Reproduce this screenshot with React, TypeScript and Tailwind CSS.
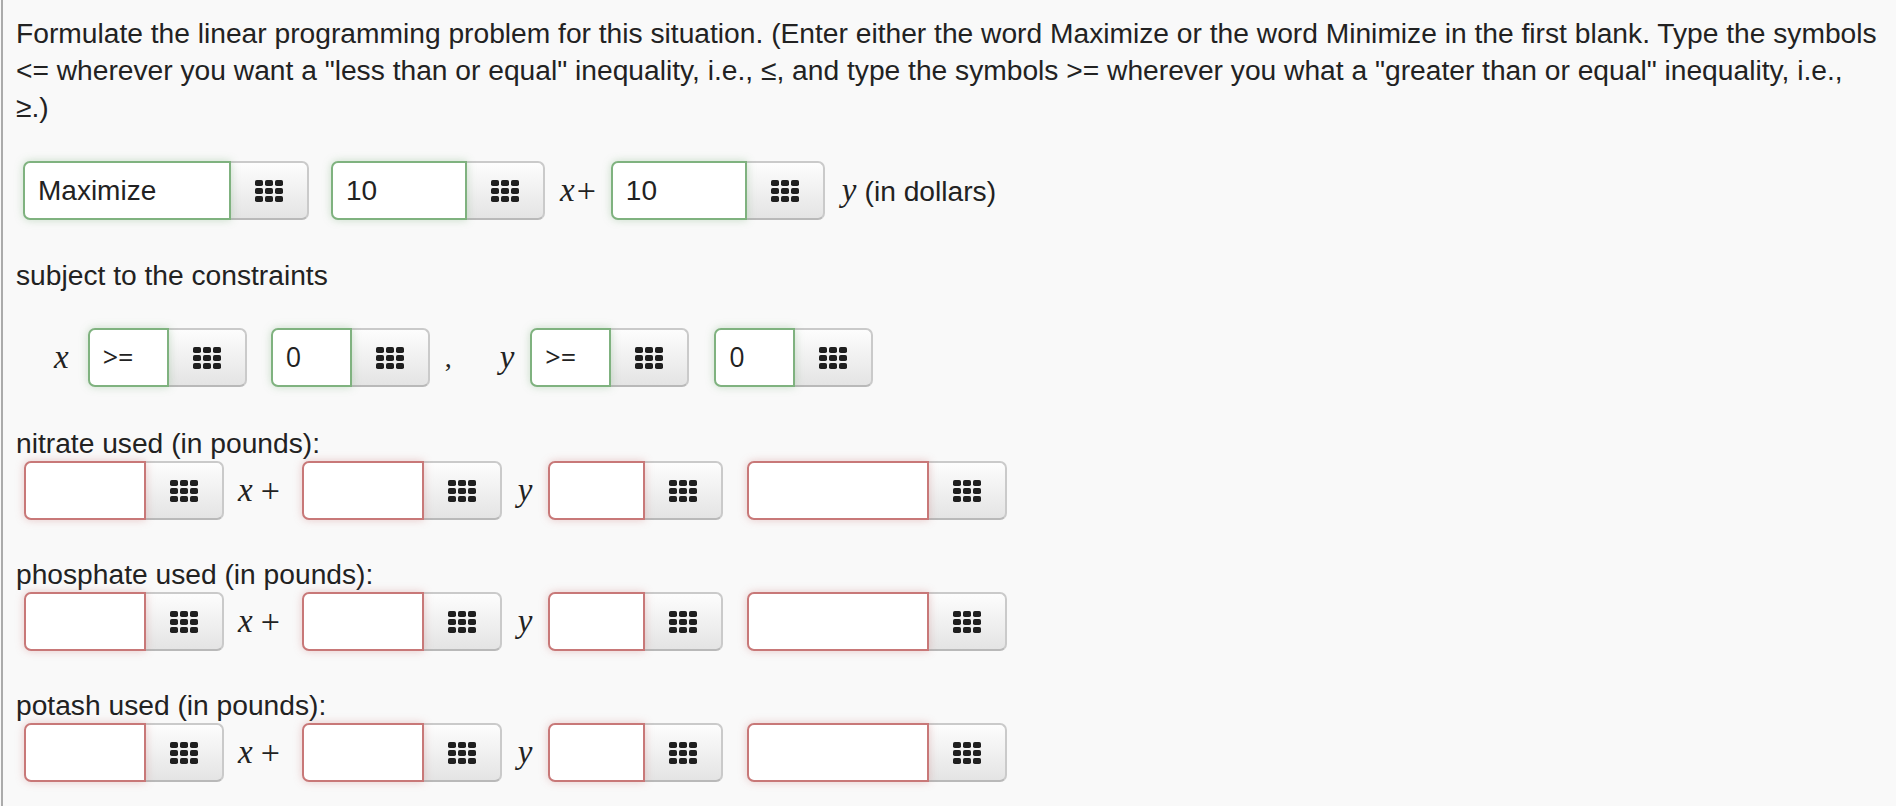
import React from 'react';

type State = 'ok' | 'bad';

function Keypad() {
  const cols = [0, 10, 20];
  const rows = [0, 8, 16];
  return (
    <svg width="28" height="22" viewBox="0 0 28 22" aria-hidden="true">
      {rows.map((y) =>
        cols.map((x) => <rect key={`${x}-${y}`} x={x} y={y} width="8" height="6" rx="1.8" fill="#1f1f1f" />),
      )}
    </svg>
  );
}

function Field({
  w,
  value,
  state,
  mono,
  className = '',
}: {
  w: string;
  value?: string;
  state: State;
  mono?: boolean;
  className?: string;
}) {
  const tone =
    state === 'ok'
      ? 'border-[#7fb27f] shadow-[0_0_9px_rgba(110,170,110,0.35)]'
      : 'border-[#c87878] shadow-[0_0_9px_rgba(200,110,110,0.35)]';
  return (
    <div className={`flex h-[59px] shrink-0 ${className}`}>
      <div
        className={`${w} relative z-10 flex items-center rounded-l-[7px] border-2 bg-white pl-[13px] text-[#222] ${tone} ${
          mono ? "font-['Open_Sans',sans-serif] text-[27px]" : 'text-[28px]'
        }`}
      >
        {value}
      </div>
      <div className="flex w-[78px] items-center justify-center rounded-r-[7px] border-2 border-l-0 border-[#cacaca] border-b-[#b9b9b9] bg-gradient-to-b from-[#fdfdfd] to-[#e4e4e4]">
        <Keypad />
      </div>
    </div>
  );
}

function V({ children, className = '' }: { children: React.ReactNode; className?: string }) {
  return (
    <span className={`font-['Liberation_Serif',serif] text-[33px] italic text-[#222] ${className}`}>{children}</span>
  );
}

function Plus({ className = '' }: { className?: string }) {
  return <span className={`font-['Liberation_Serif',serif] text-[34px] text-[#222] ${className}`}>+</span>;
}

function ResourceRow({ label, first }: { label: string; first?: boolean }) {
  return (
    <div className={first ? 'mt-[39px]' : 'mt-[37px]'}>
      <div className="leading-[35px]">{label}</div>
      <div className="ml-[8px] flex items-center">
        <Field w="w-[122px]" state="bad" />
        <span className="ml-[14px] flex items-center">
          <V>x</V>
          <Plus className="ml-[8px]" />
        </span>
        <Field w="w-[122px]" state="bad" className="ml-[22px]" />
        <V className="ml-[16px]">y</V>
        <Field w="w-[97px]" state="bad" className="ml-[15px]" />
        <Field w="w-[182px]" state="bad" className="ml-[24px]" />
      </div>
    </div>
  );
}

export default function App() {
  return (
    <div className="min-h-screen bg-[#f9f9f9] font-['Liberation_Sans',Arial,sans-serif] text-[28.2px] text-[#222]">
      <div className="ml-[1px] min-h-screen border-l-2 border-[#ababab] pl-[13px] pt-[15px] pb-6">
        <p className="leading-[37px]">
          Formulate the linear programming problem for this situation. (Enter either the word Maximize or the word
          Minimize in the first blank. Type the symbols &lt;= wherever you want a "less than or equal" inequality,
          i.e., ≤, and type the symbols &gt;= wherever you what a "greater than or equal" inequality, i.e.,
          <br />
          ≥.)
        </p>

        <div className="mt-[35px] ml-[7px] flex items-center">
          <Field w="w-[208px]" value="Maximize" state="ok" />
          <Field w="w-[136px]" value="10" state="ok" className="ml-[22px]" />
          <span className="ml-[15px] flex items-center">
            <V>x</V>
            <Plus className="ml-[2px]" />
          </span>
          <Field w="w-[136px]" value="10" state="ok" className="ml-[15px]" />
          <span className="ml-[17px] flex items-baseline">
            <V>y</V>
            <span className="ml-[8px]">(in dollars)</span>
          </span>
        </div>

        <div className="mt-[37px] leading-[37px]">subject to the constraints</div>

        <div className="mt-[34px] ml-[38px] flex items-center">
          <V>x</V>
          <Field w="w-[81px]" value=">=" state="ok" mono className="ml-[19px]" />
          <Field w="w-[81px]" value="0" state="ok" mono className="ml-[24px]" />
          <span className="ml-[15px] font-['Liberation_Serif',serif] text-[28px]">,</span>
          <V className="ml-[48px]">y</V>
          <Field w="w-[81px]" value=">=" state="ok" mono className="ml-[16px]" />
          <Field w="w-[81px]" value="0" state="ok" mono className="ml-[25px]" />
        </div>

        <ResourceRow label="nitrate used (in pounds):" first />
        <ResourceRow label="phosphate used (in pounds):" />
        <ResourceRow label="potash used (in pounds):" />
      </div>
    </div>
  );
}
